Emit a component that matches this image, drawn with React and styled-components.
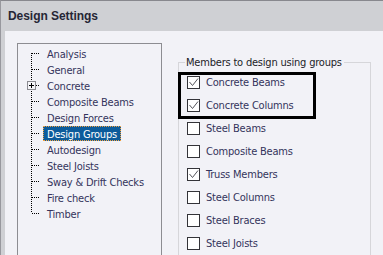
import React from "react";
import styled, { createGlobalStyle } from "styled-components";

const uiFont = `"DejaVu Sans Condensed", "Liberation Sans", Arial, sans-serif`;

const Global = createGlobalStyle`
  html, body { margin: 0; padding: 0; background: #f2f2f7; }
  body { font-family: "Liberation Sans", Arial, sans-serif; }
`;

const Window = styled.div`
  width: 383px;
  height: 255px;
  box-sizing: border-box;
  overflow: hidden;
  background: #cfd0d4;
  border-top: 1px solid #88888e;
  border-left: 1px solid #98989e;
  display: flex;
  flex-direction: column;
`;

const TitleBar = styled.div`
  height: 30px;
  flex: none;
  display: flex;
  align-items: center;
  padding-left: 7px;
  font-size: 12px;
  font-weight: bold;
  color: #262636;
  letter-spacing: -0.05px;
`;

const Body = styled.div`
  position: relative;
  flex: 1;
  margin-left: 4px;
  background: #f2f2f7;
  display: flex;
  align-items: flex-start;
  padding: 12px 0 0 12px;
  overflow: hidden;
`;

const TreePanel = styled.div`
  flex: none;
  width: 145px;
  height: 240px;
  box-sizing: border-box;
  border: 1px solid #8d8d92;
  padding-top: 1px;
  padding-left: 8px;
`;

const TreeRow = styled.div`
  height: 16px;
  display: flex;
  align-items: center;
`;

const Connector = styled.svg`
  flex: none;
  width: 17px;
  height: 16px;
  display: block;
`;

const TreeLabel = styled.span`
  height: 15px;
  line-height: 15px;
  box-sizing: border-box;
  padding: 0 3px;
  font-family: ${uiFont};
  font-size: 11px;
  letter-spacing: -0.2px;
  white-space: nowrap;
  color: ${(p) => (p.$selected ? "#ffffff" : "#34345c")};
  background: ${(p) => (p.$selected ? "#0c5b9b" : "transparent")};
  border: 1px dotted ${(p) => (p.$selected ? "#f0a040" : "transparent")};
`;

const GroupBox = styled.fieldset`
  flex: none;
  margin: 13px 0 0 16px;
  width: 193px;
  height: 240px;
  box-sizing: border-box;
  padding: 0;
  border: 1px solid #d6d6da;
`;

const Legend = styled.legend`
  margin-left: 6px;
  padding: 0 2px 0 1px;
  font-family: ${uiFont};
  font-size: 11px;
  letter-spacing: -0.2px;
  line-height: 13px;
  color: #1c1c28;
`;

const CheckList = styled.div`
  padding-top: 2px;
  padding-left: 8px;
`;

const CheckRow = styled.div`
  height: 23px;
  display: flex;
  align-items: center;
  gap: 6px;
`;

const Box = styled.span`
  flex: none;
  width: 13px;
  height: 13px;
  box-sizing: border-box;
  border: 1px solid #333338;
  background: #ffffff;
  display: flex;
  align-items: center;
  justify-content: center;
`;

const CheckLabel = styled.span`
  font-family: ${uiFont};
  font-size: 11px;
  letter-spacing: -0.2px;
  color: #34345c;
  white-space: nowrap;
`;

const Annotation = styled.div`
  position: absolute;
  left: 173px;
  top: 41px;
  width: 138px;
  height: 47px;
  box-sizing: border-box;
  border: 3px solid #000000;
  pointer-events: none;
`;

const treeItems = [
  "Analysis",
  "General",
  "Concrete",
  "Composite Beams",
  "Design Forces",
  "Design Groups",
  "Autodesign",
  "Steel Joists",
  "Sway & Drift Checks",
  "Fire check",
  "Timber",
];

const checks = [
  ["Concrete Beams", true],
  ["Concrete Columns", true],
  ["Steel Beams", false],
  ["Composite Beams", false],
  ["Truss Members", true],
  ["Steel Columns", false],
  ["Steel Braces", false],
  ["Steel Joists", false],
];

function TreeConnector({ first, last, expandable }) {
  const y1 = first ? 8 : 0;
  const y2 = last ? 8 : 16;
  return (
    <Connector viewBox="0 0 17 16">
      <line x1="5.5" y1={y1} x2="5.5" y2={y2} stroke="#000" strokeDasharray="1 1" />
      <line x1="6" y1="8.5" x2="14" y2="8.5" stroke="#000" strokeDasharray="1 1" />
      {expandable && (
        <g>
          <rect x="1.5" y="4.5" width="8" height="8" fill="#f4f4f8" stroke="#8a8a90" />
          <line x1="3" y1="8.5" x2="8" y2="8.5" stroke="#000" />
          <line x1="5.5" y1="6" x2="5.5" y2="11" stroke="#000" />
        </g>
      )}
    </Connector>
  );
}

function Check() {
  return (
    <svg width="11" height="11" viewBox="0 0 11 11">
      <polyline points="1.5,5 4.5,8.5 10,1.5" fill="none" stroke="#55555c" strokeWidth="1" />
    </svg>
  );
}

export default function App() {
  return (
    <>
      <Global />
      <Window>
        <TitleBar>Design Settings</TitleBar>
        <Body>
          <TreePanel>
            {treeItems.map((t, i) => (
              <TreeRow key={t}>
                <TreeConnector
                  first={i === 0}
                  last={i === treeItems.length - 1}
                  expandable={t === "Concrete"}
                />
                <TreeLabel $selected={t === "Design Groups"}>{t}</TreeLabel>
              </TreeRow>
            ))}
          </TreePanel>
          <GroupBox>
            <Legend>Members to design using groups</Legend>
            <CheckList>
              {checks.map(([label, on]) => (
                <CheckRow key={label}>
                  <Box>{on && <Check />}</Box>
                  <CheckLabel>{label}</CheckLabel>
                </CheckRow>
              ))}
            </CheckList>
          </GroupBox>
          <Annotation />
        </Body>
      </Window>
    </>
  );
}
